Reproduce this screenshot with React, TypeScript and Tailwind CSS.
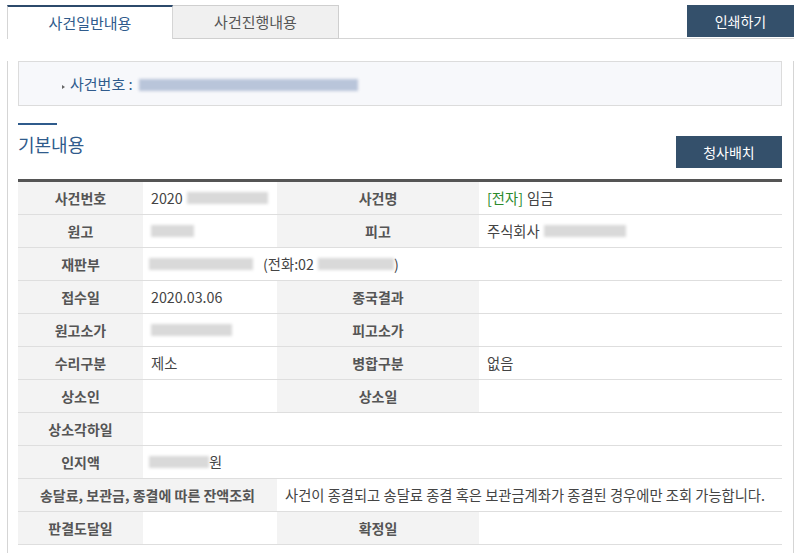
import type { ReactNode } from 'react'

const font = { fontFamily: '"Noto Sans CJK KR", "Noto Sans", sans-serif' }

function Blur({ w, tone = 'gray', className = '' }: { w: string; tone?: 'gray' | 'blue'; className?: string }) {
  const color = tone === 'blue' ? 'bg-[#b9c5da]' : 'bg-[#d9d9d9]'
  return <span className={`inline-block h-[12px] align-middle blur-[1.5px] ${color} ${w} ${className}`} />
}

function Th({ children, span = '' }: { children?: ReactNode; span?: string }) {
  return (
    <div className={`flex h-[33px] items-center justify-center border-b border-[#dedede] bg-[#f3f3f3] text-[14px] font-semibold text-[#555] ${span}`}>
      {children}
    </div>
  )
}

function Td({ children, span = '' }: { children?: ReactNode; span?: string }) {
  return (
    <div className={`flex h-[33px] items-center border-b border-[#dedede] bg-white pl-[8px] text-[14.3px] text-[#444] ${span}`}>
      {children}
    </div>
  )
}

function Tabs() {
  return (
    <div className="flex h-[34px] pl-[7px] pr-[6px]">
      <div className="flex w-[166px] items-center justify-center border-l border-r border-t-2 border-l-[#d5d5d5] border-r-[#d5d5d5] border-t-[#2c4a6b] bg-white text-[15px] text-[#2f5b8c]">
        사건일반내용
      </div>
      <div className="flex w-[166px] items-center justify-center border-b border-r border-t border-[#cfcfcf] bg-[#f0f0f0] text-[15px] text-[#555]">
        사건진행내용
      </div>
      <div className="flex-1 border-b border-[#d5d5d5]" />
      <div className="flex items-start border-b border-[#d5d5d5] pb-[1px]">
        <button className="h-[32px] w-[107px] bg-[#34506b] text-[14px] text-white">인쇄하기</button>
      </div>
    </div>
  )
}

function CaseBox() {
  return (
    <div className="mt-[22px] flex h-[45px] items-center border border-[#dcdcdc] bg-[#f7f8fb] pl-[43px] pt-[2px]">
      <span className="mr-[5px] mt-[5px] inline-block h-0 w-0 border-y-[2.5px] border-l-[3px] border-y-transparent border-l-[#666]" />
      <span className="text-[15px] text-[#2f5b8c]">사건번호 :</span>
      <Blur w="w-[219px]" tone="blue" className="ml-[6px]" />
    </div>
  )
}

function Heading() {
  return (
    <div className="mt-[17px] flex items-start justify-between">
      <div className="flex flex-col">
        <div className="h-[2px] w-[39px] bg-[#2f5b8c]" />
        <div className="mt-[6px] text-[18px] leading-[26px] text-[#2f5b8c]">기본내용</div>
      </div>
      <button className="mt-[13px] h-[32px] w-[106px] bg-[#34506b] text-[14px] text-white">청사배치</button>
    </div>
  )
}

function InfoTable() {
  return (
    <div className="mt-[11px] grid grid-cols-[125px_134px_202px_1fr] border-t-[3px] border-[#555]">
      <Th>사건번호</Th>
      <Td>
        2020
        <Blur w="w-[81px]" className="ml-[4px]" />
      </Td>
      <Th>사건명</Th>
      <Td>
        <span className="text-[#2b8a2b]">[전자]</span>
        <span className="ml-[4px]">임금</span>
      </Td>

      <Th>원고</Th>
      <Td>
        <Blur w="w-[43px]" />
      </Td>
      <Th>피고</Th>
      <Td>
        주식회사
        <Blur w="w-[82px]" className="ml-[4px]" />
      </Td>

      <Th>재판부</Th>
      <Td span="col-span-3">
        <Blur w="w-[104px]" className="-ml-[2px]" />
        <span className="ml-[10px]">(전화:02</span>
        <Blur w="w-[76px]" className="ml-[4px]" />
        <span>)</span>
      </Td>

      <Th>접수일</Th>
      <Td>2020.03.06</Td>
      <Th>종국결과</Th>
      <Td />

      <Th>원고소가</Th>
      <Td>
        <Blur w="w-[81px]" />
      </Td>
      <Th>피고소가</Th>
      <Td />

      <Th>수리구분</Th>
      <Td>제소</Td>
      <Th>병합구분</Th>
      <Td>없음</Td>

      <Th>상소인</Th>
      <Td />
      <Th>상소일</Th>
      <Td />

      <Th>상소각하일</Th>
      <Td span="col-span-3" />

      <Th>인지액</Th>
      <Td span="col-span-3">
        <Blur w="w-[60px]" className="-ml-[2px]" />
        <span>원</span>
      </Td>

      <Th span="col-span-2">송달료, 보관금, 종결에 따른 잔액조회</Th>
      <Td span="col-span-2">사건이 종결되고 송달료 종결 혹은 보관금계좌가 종결된 경우에만 조회 가능합니다.</Td>

      <Th>판결도달일</Th>
      <Td />
      <Th>확정일</Th>
      <Td />
    </div>
  )
}

export default function App() {
  return (
    <div className="h-[553px] w-[800px] overflow-hidden bg-white pt-[5px]" style={font}>
      <Tabs />
      <div className="ml-[7px] mr-[6px] h-[600px] border-l border-r border-[#d5d5d5] pl-[10px] pr-[11px]">
        <CaseBox />
        <Heading />
        <InfoTable />
      </div>
    </div>
  )
}
